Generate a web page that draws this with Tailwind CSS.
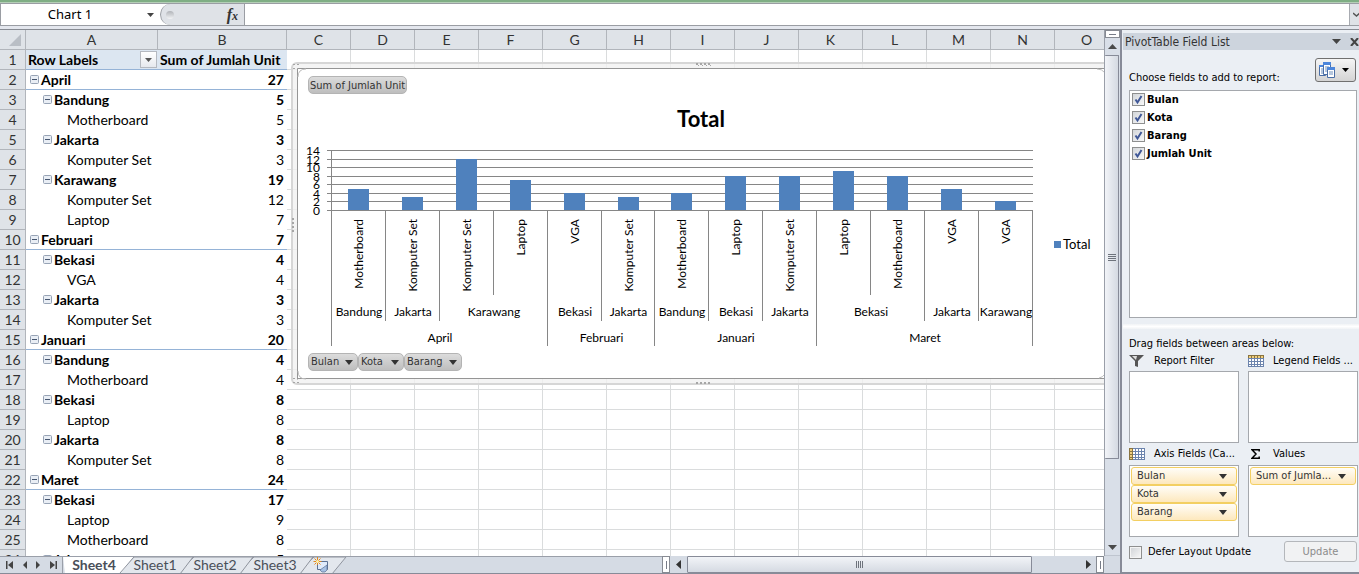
<!DOCTYPE html>
<html lang="id">
<head>
<meta charset="utf-8">
<title>Chart 1 - Sheet4</title>
<script src="https://cdn.jsdelivr.net/npm/@tailwindcss/browser@4"></script>
</head>
<body class="flex h-screen flex-col overflow-hidden bg-[#e4e7ee] font-['DejaVu_Sans_Condensed','DejaVu_Sans',sans-serif] text-[11px] text-black">

<header class="shrink-0">
  <div class="h-[3px] border-b border-[#b5cfb7] bg-[#7fae84]"></div>
  <div class="flex h-[23px] border-y border-[#9a9da3] bg-[#dfe2e7]">
    <button class="flex w-[158px] shrink-0 items-center border-l border-[#9a9da3] bg-white font-['Noto_Sans',sans-serif] text-[13px]" aria-label="Name box">
      <span class="flex-1 pr-3 pl-1 text-center">Chart 1</span>
      <svg class="mr-1 h-[4px] w-[7px]" viewBox="0 0 7 4"><path d="M0 0H7L3.500 4Z" fill="#444"/></svg>
    </button>
    <div class="flex w-[87px] shrink-0 items-center justify-between border-r border-[#9a9da3] bg-white pl-[2px]">
      <div class="flex h-full flex-1 items-center justify-between rounded-l-full border-l border-[#9a9da3] bg-[#dfe2e7] pr-1 pl-[5px]">
        <span class="h-[8px] w-[8px] rounded-full bg-linear-to-b from-[#b0b3b8] to-[#f3f4f6]"></span>
        <button class="pr-[2px] font-['Liberation_Serif',serif] text-[16px] leading-none font-bold text-[#333] italic" aria-label="Insert function">f<span class="text-[12px]">x</span></button>
      </div>
    </div>
    <input class="min-w-0 flex-1 bg-white outline-none" aria-label="Formula">
    <button class="flex w-[10px] shrink-0 items-center border-l border-[#a8abb1] bg-[#dfe2e7]" aria-label="Expand formula bar"><svg class="ml-[3px] h-[5px] w-[6px]" viewBox="0 0 6 5"><path d="M0 1L3.500 4L7 1" fill="none" stroke="#555" stroke-width="1.500"/></svg></button>
  </div>
  <div class="h-[4px] border-b border-[#878b93]"></div>
</header>

<main class="flex min-h-0 flex-1">
  <section class="flex min-w-0 flex-1 flex-col">
    <div class="flex min-h-0 flex-1">
      <div class="relative min-w-0 flex-1 overflow-hidden bg-white font-[Lato,sans-serif] text-[14px]">
        <table class="w-max table-fixed border-separate border-spacing-0 leading-[19px]">
          <thead><tr id="cols" class="h-[20px] text-[#333]"></tr></thead>
          <tbody id="rows"></tbody>
        </table>

        <div class="absolute top-[32px] left-[290px]">
          <svg id="chart" width="816" height="326" viewBox="290 62 816 326" class="block font-[Lato,sans-serif] text-[12px]">
            <rect x="292" y="63" width="840" height="321" rx="5" fill="#f1f1f1" fill-opacity=".8" stroke="#d6d6d6" stroke-width="2"/>
            <path d="M297.500 379.500V68.500H1106V378.500H298" fill="#fff" stroke="#959595"/>
            <path d="M298 77Q298 69 306 69M298 371Q298 379 306 379M1097 69Q1102 69 1104 72M1099 378Q1103 377 1104 375" fill="none" stroke="#bdbdbd"/>
            <g fill="#a6a6a6">
              <path d="M696 63h2v2h-2zM700 63h2v2h-2zM704 63h2v2h-2zM708 63h2v2h-2zM698 65h1v1h-1zM702 65h1v1h-1zM706 65h1v1h-1zM710 65h1v1h-1z"/>
              <path d="M696 382h2v2h-2zM700 382h2v2h-2zM704 382h2v2h-2zM708 382h2v2h-2z"/>
              <path d="M292 218h2v2h-2zM292 222h2v2h-2zM292 226h2v2h-2zM292 230h2v2h-2z"/>
              <path d="M293 64h2v1h-2zM297 64h2v1h-2zM293 68h2v1h-2zM293 378h2v1h-2zM293 382h2v1h-2zM297 382h2v1h-2z"/>
            </g>
            <text x="701" y="127" text-anchor="middle" class="text-[22px] font-bold">Total</text>
            <g id="plot"></g>
            <rect x="1054" y="241" width="7" height="7" fill="#4f81bd"/>
            <text x="1063" y="249" class="text-[13px]">Total</text>
          </svg>
          <button class="absolute top-[14px] left-[18px] h-[18px] rounded-[5px] border border-[#b4b4b4] bg-linear-to-b from-[#dcdcdc] to-[#bebebe] px-px pt-px font-['DejaVu_Sans_Condensed',sans-serif] text-[11px] leading-[16px] text-[#333]">Sum of Jumlah Unit</button>
          <div id="axisButtons" class="absolute top-[291px] left-[18px] flex"></div>
        </div>
      </div>

      <div class="flex w-[16px] shrink-0 flex-col border-l border-[#9a9fa9] bg-[#d9dfe8]">
        <div class="flex h-[8px] items-center justify-center border border-[#878b93] bg-white"><span class="h-px w-[7px] bg-[#777c88]"></span></div>
        <button class="flex h-[17px] items-center justify-center" aria-label="Scroll up"><svg class="h-[5px] w-[9px]" viewBox="0 0 9 5"><path d="M0 5H9L4.500 0Z" fill="#4a4a4a"/></svg></button>
        <div class="mr-px flex h-[404px] flex-col items-center justify-center gap-px rounded-[1px] border border-l-0 border-[#878b98] bg-linear-to-r from-[#f2f4f8] to-[#d5dae2]">
          <span class="h-px w-[8px] bg-[#6e737c]"></span><span class="h-px w-[8px] bg-[#6e737c]"></span><span class="h-px w-[8px] bg-[#6e737c]"></span><span class="h-px w-[8px] bg-[#6e737c]"></span>
        </div>
        <div class="flex-1"></div>
        <button class="flex h-[17px] items-center justify-center border-b border-[#bfc5cf]" aria-label="Scroll down"><svg class="h-[5px] w-[9px]" viewBox="0 0 9 5"><path d="M0 0H9L4.500 5Z" fill="#4a4a4a"/></svg></button>
      </div>
    </div>

    <footer class="flex h-[18px] shrink-0 border-b border-[#878b98] bg-[#d5dbe4] font-[Lato,sans-serif] text-[14px] text-[#4a4f59]">
      <div class="flex w-[63px] shrink-0 items-center justify-between border-t border-r border-[#9a9fa9] pr-[5px] pl-[6px]">
        <button aria-label="First sheet"><svg class="block h-[8px] w-[7px]" viewBox="0 0 7 8"><path d="M0 0h1.500v8H0zM7 0v8L2 4z" fill="#444"/></svg></button>
        <button aria-label="Previous sheet"><svg class="block h-[8px] w-[4px]" viewBox="0 0 4 8"><path d="M4 0v8L0 4z" fill="#444"/></svg></button>
        <button aria-label="Next sheet"><svg class="block h-[8px] w-[4px]" viewBox="0 0 4 8"><path d="M0 0v8L4 4z" fill="#444"/></svg></button>
        <button aria-label="Last sheet"><svg class="block h-[8px] w-[7px]" viewBox="0 0 7 8"><path d="M0 0v8l5-4zM5.500 0H7v8H5.500z" fill="#444"/></svg></button>
      </div>
      <nav class="relative flex flex-1 border-t border-[#9a9fa9] leading-[16px]">
        <svg class="absolute top-0 left-0" width="290" height="16" viewBox="63 557 290 16">
          <g stroke="#8f949e">
            <path d="M296 574L314 557H346L332 574" fill="#e3e7ed"/>
            <path d="M236 574L254 557H313L300 574" fill="#e3e7ed"/>
            <path d="M176 574L194 557H253L240 574" fill="#e3e7ed"/>
            <path d="M116 574L134 557H193L180 574" fill="#e3e7ed"/>
            <path d="M63 556L65 574H120L134 556Z" fill="#fff" stroke="none"/>
            <path d="M120 573L134 557" fill="none"/>
          </g>
          <path d="M317.500 561.500H327.500V569.500H317.500Z" fill="#dfeafa" stroke="#5b7194"/>
          <path d="M320 570L327 565V570L325 572H322Z" fill="#a7c1e4" stroke="#5b7194" stroke-width=".7"/>
          <path d="M317.500 557v8M313.500 561.500h8M314.500 558.500l6 6M320.500 558.500l-6 6" stroke="#e08a20"/>
          <circle cx="317.500" cy="561.500" r="1.500" fill="#fff3b0"/>
        </svg>
        <button class="relative w-[62px] font-bold">Sheet4</button>
        <button class="relative w-[60px]">Sheet1</button>
        <button class="relative w-[60px]">Sheet2</button>
        <button class="relative w-[60px]">Sheet3</button>
      </nav>
      <div class="flex w-[458px] shrink-0">
        <div class="flex w-[8px] items-center justify-center border border-[#878b93] bg-white"><span class="h-[8px] w-px bg-[#777c88]"></span></div>
        <button class="flex w-[17px] items-center justify-center" aria-label="Scroll left"><svg class="h-[9px] w-[5px]" viewBox="0 0 5 9"><path d="M5 0V9L0 4.500Z" fill="#333"/></svg></button>
        <div class="flex w-[345px] items-center justify-center gap-px rounded-[1px] border border-[#878b98] bg-linear-to-b from-[#f2f4f8] to-[#d5dae2]">
          <span class="h-[7px] w-px bg-[#6e737c]"></span><span class="h-[7px] w-px bg-[#6e737c]"></span><span class="h-[7px] w-px bg-[#6e737c]"></span><span class="h-[7px] w-px bg-[#6e737c]"></span>
        </div>
        <div class="flex-1"></div>
        <button class="flex w-[16px] items-center justify-center" aria-label="Scroll right"><svg class="h-[9px] w-[5px]" viewBox="0 0 5 9"><path d="M0 0V9L5 4.500Z" fill="#333"/></svg></button>
        <div class="mr-[16px] flex w-[8px] items-center justify-center border border-[#878b93] bg-white"><span class="h-[8px] w-px bg-[#777c88]"></span></div>
      </div>
    </footer>
  </section>

  <aside class="flex w-[239px] shrink-0 flex-col border-b-2 border-l-2 border-[#878b98] bg-[#ebeff4] pt-[3px]">
    <div class="ml-px flex h-[17px] shrink-0 items-center bg-[#cdd4dd] pl-[2px] text-[12px] text-[#333]">
      <h2 class="flex-1 whitespace-nowrap">PivotTable Field List</h2>
      <button class="mr-[9px]" aria-label="Options"><svg class="block h-[5px] w-[9px]" viewBox="0 0 9 5"><path d="M0 0H9L4.500 5Z" fill="#444"/></svg></button>
      <button aria-label="Close"><svg class="block h-[8px] w-[9px]" viewBox="0 0 9 8"><path d="M1 0L8 8M8 0L1 8" stroke="#444" stroke-width="2"/></svg></button>
    </div>
    <div class="flex h-[40px] shrink-0 items-center justify-between pr-[3px] pl-[7px]">
      <p class="pt-4 whitespace-nowrap">Choose fields to add to report:</p>
      <button class="flex h-[24px] w-[41px] items-center justify-between rounded-[3px] border border-[#707070] bg-linear-to-b from-[#f5f5f5] to-[#d4d4d4] pr-[6px] pl-[3px]" aria-label="Field list layout">
        <svg class="h-[17px] w-[16px]" viewBox="0 0 16 17"><g fill="#fff" stroke="#4a6ea5"><path d="M.5 3.500h6v10h-6z"/><path d="M4.500.5h7v12h-7z"/><path d="M8.500 5.500h7v10h-7z"/></g><path d="M4 0h8v3H4zM8 5h8v3H8zM0 3h4v2H0z" fill="#4c86dc"/><path d="M2 7h2M2 9h2M2 11h2M6 5h4M6 7h2M6 9h2M10 10h4M10 12h4" stroke="#6d8ebb"/></svg>
        <svg class="h-[4px] w-[7px]" viewBox="0 0 7 4"><path d="M0 0H7L3.500 4Z"/></svg>
      </button>
    </div>
    <div id="fields" class="mr-[2px] ml-[7px] h-[228px] shrink-0 border border-[#a5a8ad] bg-white text-[11px] font-bold"></div>
    <div class="mt-[6px] ml-px h-[5px] shrink-0 bg-linear-to-b from-[#f1f3f6] via-white to-[#f1f3f6]"></div>
    <div class="pr-[1px] pl-[7px]">
      <p class="mt-[8px] leading-[14px]">Drag fields between areas below:</p>
      <div class="grid grid-cols-2 gap-x-[9px]">
        <div>
          <h3 class="flex h-[20px] items-center"><svg class="mr-[10px] h-[12px] w-[15px]" viewBox="0 0 15 12"><path d="M0 0H15L9 6V12L6 11V6Z" fill="#555"/><path d="M3 1H8L7 5Z" fill="#ddd"/></svg>Report Filter</h3>
          <div class="h-[72px] border border-[#a5a8ad] bg-white"></div>
        </div>
        <div>
          <h3 class="flex h-[20px] items-center whitespace-nowrap"><svg class="mr-[9px] h-[12px] w-[16px]" viewBox="0 0 16 12"><path fill="#fff" d="M0 0h16v12H0z"/><path d="M.5 0V12M3.500 0V12M6.500 0V12M9.500 0V12M12.500 0V12M15.500 0V12M0 3.500H16M0 6.500H16M0 9.500H16M0 11.500H16" stroke="#6c84ad"/><path d="M0 0h16v3H0z" fill="#8a7440"/><path fill="#f0cf7d" d="M1 1h2v2H1zM4 1h2v2H4zM7 1h2v2H7zM10 1h2v2h-2zM13 1h2v2h-2z"/></svg>Legend Fields ...</h3>
          <div class="h-[72px] border border-[#a5a8ad] bg-white"></div>
        </div>
        <div>
          <h3 class="flex h-[22px] items-center whitespace-nowrap"><svg class="mr-[9px] h-[12px] w-[16px]" viewBox="0 0 16 12"><path fill="#fff" d="M0 0h16v12H0z"/><path d="M.5 0V12M3.500 0V12M6.500 0V12M9.500 0V12M12.500 0V12M15.500 0V12M0 .5H16M0 3.500H16M0 6.500H16M0 9.500H16M0 11.500H16" stroke="#6c84ad"/><path d="M0 0h4v12H0z" fill="#8a7440"/><path fill="#f0cf7d" d="M1 1h2v2H1zM1 4h2v2H1zM1 7h2v2H1zM1 10h2v1H1z"/></svg>Axis Fields (Ca...</h3>
          <div id="axisFields" class="h-[72px] border border-[#a5a8ad] bg-white p-px"></div>
        </div>
        <div>
          <h3 class="flex h-[22px] items-center"><svg class="mr-[13px] ml-[3px] h-[10px] w-[9px]" viewBox="0 0 9 10"><path d="M8.200 2.500V.8H1L5 5L1 9.200H8.200V7.500" fill="none" stroke="#000" stroke-width="1.500"/></svg>Values</h3>
          <div id="valueFields" class="h-[72px] border border-[#a5a8ad] bg-white p-px"></div>
        </div>
      </div>
      <div class="mt-[4px] flex h-[21px] items-center justify-between pr-px">
        <label class="flex items-center gap-[6px] pt-px whitespace-nowrap"><input type="checkbox" class="size-[13px] appearance-none border border-[#8e8f8f] bg-linear-to-br from-[#cfd2d6] to-[#f8f8f8] shadow-[inset_0_0_0_1px_#f4f4f4]">Defer Layout Update</label>
        <button disabled class="h-[21px] w-[73px] rounded-[3px] border border-[#b4b7bb] bg-[#f1f2f3] pt-px text-[#8b8b8b]">Update</button>
      </div>
    </div>
  </aside>
</main>

<script>
const letters = 'ABCDEFGHIJKLMNO';
document.getElementById('cols').innerHTML =
  '<th class="w-[26px] border-r border-b border-[#b1b5bb] bg-[#dfe3e8] p-0"><svg class="ml-[9px] block h-[12px] w-[12px]" viewBox="0 0 12 12"><path d="M12 0V12H0Z" fill="#b9bec5"/></svg></th>' +
  [...letters].map((c, i) => `<th class="${i === 0 ? 'w-[132px]' : i === 1 ? 'w-[129px]' : 'w-[64px]'} border-r border-b border-[#b1b5bb] bg-[#dfe3e8] p-0 font-normal">${c}</th>`).join('');

// [indent level, label, value]
const data = [
  [0,'April',27],[1,'Bandung',5],[2,'Motherboard',5],[1,'Jakarta',3],[2,'Komputer Set',3],[1,'Karawang',19],[2,'Komputer Set',12],[2,'Laptop',7],
  [0,'Februari',7],[1,'Bekasi',4],[2,'VGA',4],[1,'Jakarta',3],[2,'Komputer Set',3],
  [0,'Januari',20],[1,'Bandung',4],[2,'Motherboard',4],[1,'Bekasi',8],[2,'Laptop',8],[1,'Jakarta',8],[2,'Komputer Set',8],
  [0,'Maret',24],[1,'Bekasi',17],[2,'Laptop',9],[2,'Motherboard',8],[1,'Jakarta',5]];
const blanks = '<td class="border-r border-b border-[#dadcdd] p-0"></td>'.repeat(13);
const head = n => `<th class="border-r border-b border-[#b1b5bb] bg-[#dfe3e8] p-0 font-normal text-[#333]">${n}</th>`;
const minus = '<button class="mr-[2px] inline-block align-[1px]" aria-label="Collapse"><svg class="block h-[9px] w-[9px]" viewBox="0 0 9 9"><rect x=".5" y=".5" width="8" height="8" rx="1" fill="#e9eef5" stroke="#97a3b5"/><path d="M2 4.500H7" stroke="#44546e"/></svg></button>';
const pad = ['pl-[4px]', 'pl-[17px]', 'pl-[41px]'];
const line = ['border-b border-[#95b3d7]', 'border-b border-white', 'border-b border-white'];
document.getElementById('rows').innerHTML =
  `<tr class="h-[20px]">${head(1)}<td class="border-b border-[#95b3d7] bg-[#dce6f1] p-0 font-bold"><div class="flex items-center justify-between pr-px pl-[2px]">Row Labels<button class="flex h-[17px] w-[17px] items-center justify-center border border-[#b5b9c0] bg-linear-to-b from-white to-[#e6e9ee]" aria-label="Filter"><svg class="h-[4px] w-[7px]" viewBox="0 0 7 4"><path d="M0 0H7L3.500 4Z" fill="#555"/></svg></button></div></td><td class="border-b border-[#95b3d7] bg-[#dce6f1] p-0 pl-[2px] font-bold whitespace-nowrap">Sum of Jumlah Unit</td>${blanks}</tr>` +
  data.map(([lv, t, v], i) => `<tr class="h-[20px] ${lv < 2 ? 'font-bold' : ''}">${head(i + 2)}<td class="${line[lv]} ${pad[lv]} py-0 pr-0 whitespace-nowrap">${lv < 2 ? minus : ''}${t}</td><td class="${line[lv]} py-0 pr-[3px] pl-0 text-right">${v}</td>${blanks}</tr>`).join('');

const xs = [331,385,439,493,547,601,654,708,762,816,870,924,978,1032];
const ends = [346,321,321,295,346,321,346,321,321,346,295,321,321,346];
const bars = [['Motherboard',5],['Komputer Set',3],['Komputer Set',12],['Laptop',7],['VGA',4],['Komputer Set',3],['Motherboard',4],['Laptop',8],['Komputer Set',8],['Laptop',9],['Motherboard',8],['VGA',5],['VGA',2]];
const cities = [['Bandung',0,1],['Jakarta',1,2],['Karawang',2,4],['Bekasi',4,5],['Jakarta',5,6],['Bandung',6,7],['Bekasi',7,8],['Jakarta',8,9],['Bekasi',9,11],['Jakarta',11,12],['Karawang',12,13]];
const months = [['April',0,4],['Februari',4,6],['Januari',6,9],['Maret',9,13]];
const yOf = v => Math.round(210 - v * 60 / 14);
let s = '';
for (let v = 0; v <= 14; v += 2) {
  s += `<path d="M327 ${yOf(v) + .5}H1033" stroke="#868686"/><text x="320" y="${yOf(v) + 5}" text-anchor="end">${v}</text>`;
}
bars.forEach(([t, v], i) => {
  s += `<rect x="${xs[i] + 17}" y="${yOf(v)}" width="21" height="${210 - yOf(v)}" fill="#4f81bd"/>`;
  s += `<text transform="translate(${xs[i] + 32} 219) rotate(-90)" text-anchor="end">${t}</text>`;
});
xs.forEach((x, i) => s += `<path d="M${x + .5} ${i ? 210 : 150}V${ends[i]}" stroke="#868686"/>`);
cities.forEach(([t, a, b]) => s += `<text x="${(xs[a] + xs[b]) / 2 + 1}" y="316" text-anchor="middle">${t}</text>`);
months.forEach(([t, a, b]) => s += `<text x="${(xs[a] + xs[b]) / 2 + 1}" y="342" text-anchor="middle">${t}</text>`);
document.getElementById('plot').innerHTML = s;

const arrow = '<svg class="h-[5px] w-[8px]" viewBox="0 0 8 5"><path d="M0 0H8L4 5Z" fill="#333"/></svg>';
document.getElementById('axisButtons').innerHTML = [['Bulan','w-[50px]'],['Kota','w-[46px]'],['Barang','w-[58px]']].map(([t, w]) =>
  `<button class="${w} flex h-[18px] items-center justify-between rounded-[5px] border border-[#b4b4b4] bg-linear-to-b from-[#dcdcdc] to-[#bebebe] pt-px pr-1 pl-[2px] font-['DejaVu_Sans_Condensed',sans-serif] text-[11px] text-[#333]">${t}${arrow}</button>`).join('');

document.getElementById('fields').innerHTML = ['Bulan','Kota','Barang','Jumlah Unit'].map(t =>
  `<label class="flex h-[18px] items-center gap-[2px] pl-[2px]"><span class="mb-px grid"><input type="checkbox" checked class="col-start-1 row-start-1 size-[13px] appearance-none border border-[#8e8f8f] bg-linear-to-br from-[#d3d6da] to-[#f8f8f8]"><svg class="pointer-events-none z-10 col-start-1 row-start-1 size-[13px]" viewBox="0 0 13 13"><path d="M3.500 6.500L5.500 9.500L9.500 3" fill="none" stroke="#3f5797" stroke-width="2"/></svg></span>${t}</label>`).join('');

const chip = t => `<button class="flex h-[18px] w-full items-center justify-between rounded-[3px] border border-[#f3cf62] bg-linear-to-b from-[#fffdf8] to-[#fde8bd] pt-px pr-[9px] pl-[5px] text-left whitespace-nowrap text-[#333]">${t}${arrow}</button>`;
document.getElementById('axisFields').innerHTML = ['Bulan','Kota','Barang'].map(chip).join('');
document.getElementById('valueFields').innerHTML = chip('Sum of Jumla...');
</script>
</body>
</html>
